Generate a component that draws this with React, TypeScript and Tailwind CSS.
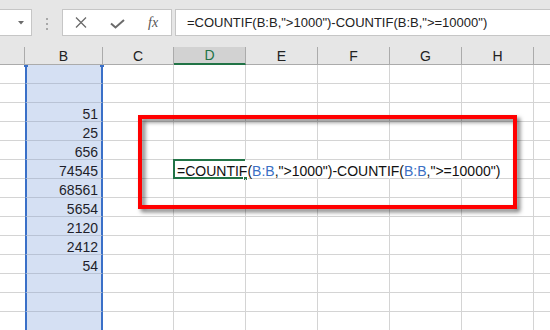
import React from "react";

/* Spreadsheet window: formula bar, column headers, grid with a highlighted column */

const HEADERS = ["", "B", "C", "D", "E", "F", "G", "H", ""];
const VALUES = ["", "", "51", "25", "656", "74545", "68561", "5654", "2120", "2412", "54", "", "", ""];
const ACTIVE_ROW = 5;

function Formula() {
  return (
    <>
      =COUNTIF(<span className="text-[#3b6fc4]">B:B</span>,"&gt;1000")-COUNTIF(
      <span className="text-[#3b6fc4]">B:B</span>,"&gt;=10000")
    </>
  );
}

function FormulaBar() {
  return (
    <div className="flex h-[47px] items-start bg-[#e6e6e6] pt-[9px]">
      {/* name box */}
      <div className="flex h-[27px] w-[32px] items-center justify-end border-y border-r border-[#c6c6c6] bg-white pr-[7px]">
        <svg width="6" height="4" viewBox="0 0 6 4">
          <polygon points="0,0 6,0 3,3.5" fill="#6b6b6b" />
        </svg>
      </div>
      {/* grip dots */}
      <div className="ml-[14px] mt-[9px] flex w-[2px] flex-col gap-[3px]">
        <span className="h-[2px] w-[2px] bg-[#a8a8a8]" />
        <span className="h-[2px] w-[2px] bg-[#a8a8a8]" />
        <span className="h-[2px] w-[2px] bg-[#a8a8a8]" />
      </div>
      {/* cancel / enter / fx */}
      <div className="ml-[14px] flex h-[27px] w-[110px] items-center border border-[#c6c6c6] bg-white pl-[12px]">
        <svg width="12" height="11" viewBox="0 0 12 11">
          <path d="M1 0.5 L11 10.5 M11 0.5 L1 10.5" stroke="#6b6b6b" strokeWidth="1.3" fill="none" />
        </svg>
        <svg className="ml-[23px] mt-[2px]" width="15" height="10" viewBox="0 0 15 10">
          <path d="M1 4.5 L5.5 8.5 L14 1" stroke="#6b6b6b" strokeWidth="2" fill="none" />
        </svg>
        <span className="ml-[23px] font-['Liberation_Serif',serif] text-[14px] italic leading-none text-[#555]">
          fx
        </span>
      </div>
      {/* formula input */}
      <div className="ml-[3px] flex h-[27px] flex-1 items-center whitespace-nowrap border-y border-l border-[#c6c6c6] bg-white pl-[11px] text-[13px] text-[#222]">
        =COUNTIF(B:B,"&gt;1000")-COUNTIF(B:B,"&gt;=10000")
      </div>
    </div>
  );
}

function HeaderRow() {
  return (
    <>
      {HEADERS.map((h, i) => {
        const isD = h === "D";
        const last = i === HEADERS.length - 1;
        return (
          <div
            key={i}
            className={`flex h-[18px] items-end justify-center pb-[1px] text-[14px] leading-[14px] ${
              last ? "border-b" : "border-r border-b"
            } ${
              isD
                ? "border-r-[#ababab] border-b-2 border-b-[#217346] bg-[#d2d2d2] text-[#217346]"
                : "border-[#ababab] bg-[#e6e6e6] text-[#222]"
            }`}
          >
            {h}
          </div>
        );
      })}
    </>
  );
}

function DataRow({ value, row }: { value: string; row: number }) {
  const active = row === ACTIVE_ROW;
  return (
    <>
      <div className="h-[19px] border-b border-[#d4d4d4]" />
      <div className="relative flex h-[19px] items-end justify-end border-x-2 border-b border-x-[#3a70c8] border-b-[#b9c3d5] bg-[#d5e0f3] pr-[3px] text-[14px] leading-[14px] text-[#1e1e2a]">
        {row === 0 && (
          <>
            <span className="absolute -left-[3px] top-0 h-[2px] w-[4px] bg-[#3a70c8]" />
            <span className="absolute -right-[3px] top-0 h-[2px] w-[4px] bg-[#3a70c8]" />
          </>
        )}
        {value}
      </div>
      {/* C */}
      <div className="h-[19px] border-r border-b border-[#d4d4d4]" />
      {/* D */}
      <div
        className={`relative z-10 flex h-[19px] items-end whitespace-nowrap border-b border-[#d4d4d4] pl-[3px] text-[14px] leading-[14px] text-[#111] ${
          active ? "border-r border-r-transparent" : "border-r"
        }`}
      >
        {active && (
          <>
            <span className="absolute -top-[1px] -bottom-[1px] -left-[1px] right-0 border-2 border-r-0 border-[#217346]" />
            <span className="absolute -right-[3px] -bottom-[3px] h-[5px] w-[5px] border border-white bg-[#217346]" />
            <Formula />
          </>
        )}
      </div>
      {/* E F G */}
      {[0, 1, 2].map((k) => (
        <div
          key={k}
          className={`h-[19px] border-b border-[#d4d4d4] ${active ? "border-r border-r-transparent" : "border-r"}`}
        />
      ))}
      {/* H */}
      <div className="h-[19px] border-r border-b border-[#d4d4d4]" />
      <div className="h-[19px] border-b border-[#d4d4d4]" />
    </>
  );
}

export default function App() {
  return (
    <div className="relative h-[330px] w-[550px] overflow-hidden bg-white font-['Liberation_Sans',Arial,sans-serif]">
      <FormulaBar />
      <div className="grid grid-cols-[25px_78px_71px_72px_72px_72px_72px_72px_1fr]">
        <HeaderRow />
        {VALUES.map((v, i) => (
          <DataRow key={i} value={v} row={i} />
        ))}
      </div>
      {/* red callout frame */}
      <div className="absolute left-[138px] top-[115px] z-20 h-[94px] w-[379px] border-4 border-[#ff0000] drop-shadow-[3px_3px_2px_rgba(0,0,0,0.55)]" />
    </div>
  );
}
